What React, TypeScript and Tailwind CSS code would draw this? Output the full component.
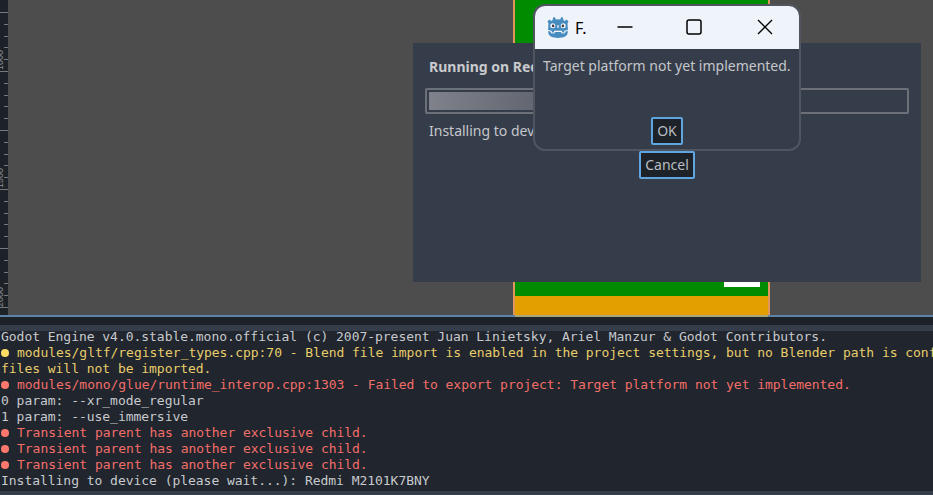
type Level = "plain" | "warn" | "error";

interface LogLine {
  level: Level;
  text: string;
  dot?: boolean;
}

const LOG_LINES: LogLine[] = [
  { level: "plain", text: "Godot Engine v4.0.stable.mono.official (c) 2007-present Juan Linietsky, Ariel Manzur & Godot Contributors." },
  { level: "warn", dot: true, text: "modules/gltf/register_types.cpp:70 - Blend file import is enabled in the project settings, but no Blender path is configured in your Editor Settings. Blend" },
  { level: "warn", text: "files will not be imported." },
  { level: "error", dot: true, text: "modules/mono/glue/runtime_interop.cpp:1303 - Failed to export project: Target platform not yet implemented." },
  { level: "plain", text: "0 param: --xr_mode_regular" },
  { level: "plain", text: "1 param: --use_immersive" },
  { level: "error", dot: true, text: "Transient parent has another exclusive child." },
  { level: "error", dot: true, text: "Transient parent has another exclusive child." },
  { level: "error", dot: true, text: "Transient parent has another exclusive child." },
  { level: "plain", text: "Installing to device (please wait...): Redmi M2101K7BNY" },
];

// Ruler ticks every 11.8px, long one every fifth
const TICKS = Array.from({ length: 27 }, (_, i) => i);

const RULER_LABELS = [
  { text: "1000", top: 50 },
  { text: "1500", top: 168 },
  { text: "2000", top: 287 },
];

function Ruler() {
  return (
    <div className="relative h-full w-2 shrink-0 overflow-hidden bg-[#1d2229]">
      {TICKS.map((i) => (
        <div
          key={i}
          className="absolute right-0 h-px bg-[#767a80]"
          style={{ top: Math.round(12 + i * 11.8), width: i % 5 === 0 ? 8 : 4 }}
        />
      ))}
      {RULER_LABELS.map((label) => (
        <span
          key={label.text}
          className="absolute left-[-10px] h-[10px] w-[20px] origin-center -rotate-90 text-center font-['Liberation_Sans',sans-serif] text-[9px] leading-[10px] text-[#8b8f95]"
          style={{ top: label.top + 5 }}
        >
          {label.text}
        </span>
      ))}
    </div>
  );
}

function GodotIcon() {
  return (
    <svg viewBox="0 0 22 22" className="h-[22px] w-[22px] shrink-0">
      <path
        fill="#478cbf"
        d="M6 .6l2-.4.7 2.200q2.300-.4 4.600 0l.7-2.200 2 .4.300 2.500 1.400.8 2-1.300 1.800 1.800-1 1.800.5 7.800-.5 2.500c-.4 2.500-4 4.400-9.500 4.400s-9.100-1.900-9.500-4.400l-.5-2.500.5-7.800-1-1.800 1.800-1.800 2 1.300 1.400-.8z"
      />
      <path
        fill="none"
        stroke="#f4f7fb"
        strokeWidth="1.100"
        d="M1 13.500l3.200.7.300 1.600 2.600.2.400-1.600h7l.4 1.600 2.600-.2.300-1.600 3.200-.7"
      />
      <circle cx="5.800" cy="8.700" r="2.500" fill="#f4f7fb" />
      <circle cx="16.200" cy="8.700" r="2.500" fill="#f4f7fb" />
      <circle cx="6.100" cy="8.900" r="1.300" fill="#414042" />
      <circle cx="15.900" cy="8.900" r="1.300" fill="#414042" />
      <rect x="10.300" y="8" width="1.400" height="3" rx=".7" fill="#f4f7fb" />
    </svg>
  );
}

function DialogButton({ label, className }: { label: string; className: string }) {
  return (
    <div
      className={`flex items-center justify-center rounded-[2px] border-2 border-[#5fa5e0] bg-[#1d2229] text-[14px] leading-none text-[#b9bcc1] ${className}`}
    >
      {label}
    </div>
  );
}

function ExportDialog() {
  return (
    <div className="absolute left-[413px] top-[43px] flex h-[239px] w-[508px] flex-col bg-[#363d4a] px-3 pt-[14px] text-[14px]">
      <div className="h-[20px] pl-1 font-bold leading-[20px] text-[#c8cacd]">Running on Redmi M2101K7BNY</div>
      <div className="mt-[11px] h-[26px] rounded-[2px] border-2 border-[#6c7079] p-[2px]">
        <div className="h-full w-[120px] rounded-[1px] bg-gradient-to-r from-[#7f828b] to-[#5f636d]" />
      </div>
      <div className="mt-[7px] pl-1 leading-[20px] text-[#c4c6ca]">Installing to device, please wait...</div>
      <div className="mt-[10px] flex justify-center">
        <DialogButton label="Cancel" className="h-[28px] w-[56px]" />
      </div>
    </div>
  );
}

function AlertWindow() {
  return (
    <div className="absolute left-[533px] top-[4px] flex h-[147px] w-[268px] flex-col overflow-hidden rounded-[12px] border-2 border-[#50555f] bg-[#363d4a] text-[14px]">
      <div className="flex h-[43px] shrink-0 items-center bg-[#eff3fa] text-black">
        <div className="ml-[12px] mt-[1px]">
          <GodotIcon />
        </div>
        <span className="ml-[6px] w-[12px] text-[16px]">F.</span>
        <svg viewBox="0 0 16 16" className="ml-[30px] -mt-[2px] h-4 w-4 shrink-0" fill="none" stroke="black" strokeWidth="1.300">
          <path d="M.5 8h15" />
        </svg>
        <svg viewBox="0 0 16 16" className="ml-[53px] -mt-[2px] h-4 w-4 shrink-0" fill="none" stroke="black" strokeWidth="1.500">
          <rect x="1" y="1" width="14" height="14" rx="2" />
        </svg>
        <svg viewBox="0 0 16 16" className="ml-[55px] -mt-[2px] h-4 w-4 shrink-0" fill="none" stroke="black" strokeWidth="1.300">
          <path d="M1 1l14 14M15 1L1 15" />
        </svg>
      </div>
      <div className="pl-[8px] pt-[7px] leading-[20px] text-[#c4c6ca]">Target platform not yet implemented.</div>
      <div className="mt-auto flex justify-center pb-[4px]">
        <DialogButton label="OK" className="h-[28px] w-[32px]" />
      </div>
    </div>
  );
}

function GameView() {
  return (
    <div className="absolute left-[505px] top-0 flex h-full w-[257px] flex-col border-x-2 border-[#e0965a] bg-[#008c00]">
      <div className="relative flex-1">
        <div className="absolute right-[8px] top-[282px] h-[5px] w-[36px] bg-white" />
      </div>
      <div className="h-[19px] bg-[#e39f00]" />
    </div>
  );
}

function LogRow({ line }: { line: LogLine }) {
  const color =
    line.level === "warn" ? "text-[#e8cd6a]" : line.level === "error" ? "text-[#f36e68]" : "text-[#c8cacd]";
  const dotColor = line.level === "warn" ? "bg-[#ffdd65]" : "bg-[#ff786b]";
  return (
    <div className={`flex h-4 items-center whitespace-pre pl-px ${color}`}>
      {line.dot && <span className={`mr-2 h-2 w-2 shrink-0 rounded-full ${dotColor}`} />}
      {line.text}
    </div>
  );
}

export default function App() {
  return (
    <div className="relative flex h-[495px] w-[933px] flex-col overflow-hidden bg-[#1d2229]">
      <div className="relative flex h-[315px] shrink-0">
        <Ruler />
        <div className="relative flex-1 bg-[#4d4d4d]">
          <GameView />
        </div>
      </div>
      <div className="relative h-[2px] shrink-0 bg-[#5d84a8]">
        <div className="absolute left-[515px] top-0 h-full w-[253px] bg-[#a8a67a]" />
      </div>
      <div className="h-2 shrink-0 bg-[#1d2229]" />
      <div className="h-[6px] shrink-0 bg-[#363d4a]" />
      <div className="h-[160px] shrink-0 overflow-hidden bg-[#20252e] font-['DejaVu_Sans_Mono',monospace] text-[13px] leading-4 tracking-[-0.035px]">
        <div className="-mt-[2px]">
          {LOG_LINES.map((line, i) => (
            <LogRow key={i} line={line} />
          ))}
        </div>
      </div>
      <div className="flex-1 bg-[#363d4a]" />
      <div className="contents font-['Noto_Sans',sans-serif]">
        <ExportDialog />
        <AlertWindow />
      </div>
    </div>
  );
}
